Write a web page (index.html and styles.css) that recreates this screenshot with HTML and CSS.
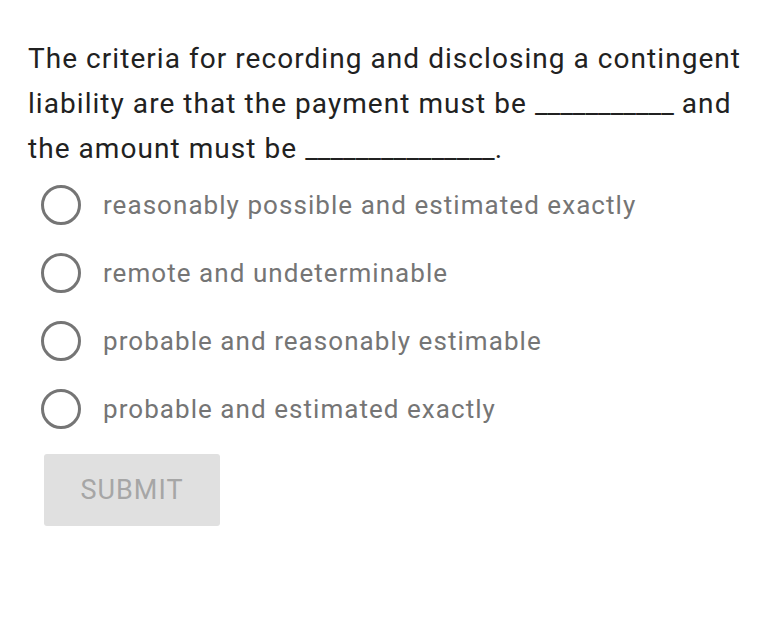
FILE: index.html
```html
<!DOCTYPE html>
<html lang="en">
<head>
  <meta charset="UTF-8">
  <title>Question</title>
  <link rel="stylesheet" href="styles.css">
</head>
<body>
  <div class="question">
    <p class="prompt">The criteria for recording and disclosing a contingent liability are that the payment must be <span class="blank">___________</span> and the amount must be <span class="blank">_______________</span>.</p>

    <ul class="options">
      <li class="option"><span class="radio"></span><span class="label">reasonably possible and estimated exactly</span></li>
      <li class="option"><span class="radio"></span><span class="label">remote and undeterminable</span></li>
      <li class="option"><span class="radio"></span><span class="label">probable and reasonably estimable</span></li>
      <li class="option"><span class="radio"></span><span class="label">probable and estimated exactly</span></li>
    </ul>

    <button class="submit" disabled>SUBMIT</button>
  </div>
</body>
</html>
```

FILE: styles.css
```css
* {
  margin: 0;
  padding: 0;
  box-sizing: border-box;
  font-family: Roboto, 'Liberation Sans', sans-serif;
}

body {
  background: #fff;
  padding: 36px 28px 0 28px;
}

.prompt {
  font-size: 28px;
  line-height: 45px;
  letter-spacing: 1.05px;
  color: #212121;
}

.blank {
  letter-spacing: 0;
}

.options {
  list-style: none;
  padding-left: 13px;
}

.option {
  display: flex;
  align-items: center;
  height: 68px;
}

.radio {
  width: 40px;
  height: 40px;
  border: 3px solid #757575;
  border-radius: 50%;
  margin-right: 22px;
}

.label {
  font-size: 26px;
  letter-spacing: 1.05px;
  color: #757575;
}

.submit {
  margin-top: 11px;
  margin-left: 16px;
  width: 176px;
  height: 72px;
  border: none;
  border-radius: 3px;
  background: #e0e0e0;
  color: #a6a6a6;
  font-size: 27px;
  letter-spacing: 1px;
}
```
